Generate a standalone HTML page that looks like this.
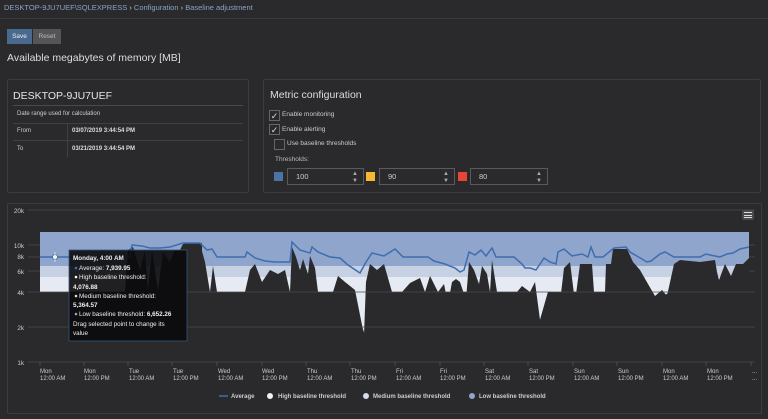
<!DOCTYPE html>
<html style="background:#2a2a2c"><head><meta charset="utf-8"><style>
*{margin:0;padding:0;box-sizing:border-box}
html,body{background:#2a2a2c}
body{width:768px;height:419px;font-family:"Liberation Sans",sans-serif;color:#ddd;position:relative;overflow:hidden}
.a{position:absolute;white-space:nowrap}
.panel{position:absolute;border:1px solid #3c3c3f;border-radius:2px}
.chk{position:absolute;width:11px;height:11px;border:1px solid #666;font-size:9px;line-height:10px;text-align:center;color:#ddd}
.inp{position:absolute;height:17px;border:1px solid #5a5a5d;font-size:7.5px;line-height:15px;padding-left:8px;color:#ccc}
.inp span{position:absolute;right:5px;font-size:6px;line-height:7px;top:2px;color:#aaa}
.sw{position:absolute;width:9px;height:9px}
</style></head><body>
<div class="a" style="left:0;top:0;width:768px;height:18px;background:#2a2a2c"></div>
<div class="a" style="left:4px;top:3px;font-size:7.5px;color:#8aa3c6">DESKTOP-9JU7UEF\SQLEXPRESS <span style="color:#ccc">›</span> Configuration <span style="color:#ccc">›</span> Baseline adjustment</div>
<div class="a" style="left:0;top:18px;width:768px;height:1px;background:#3a3a3c"></div>
<div class="a" style="left:7px;top:29px;width:25px;height:15px;background:#49698f;font-size:6.5px;line-height:15px;text-align:center;color:#eee">Save</div>
<div class="a" style="left:33px;top:29px;width:28px;height:15px;background:#555557;font-size:6.5px;line-height:15px;text-align:center;color:#bbb">Reset</div>
<div class="a" style="left:7px;top:52px;font-size:10.5px;color:#ddd">Available megabytes of memory [MB]</div>

<div class="panel" style="left:7px;top:79px;width:242px;height:114px"></div>
<div class="a" style="left:13px;top:90px;font-size:10.5px;color:#e6e6e6">DESKTOP-9JU7UEF</div>
<div class="a" style="left:13px;top:105px;width:230px;height:1px;background:#4a4a4d"></div>
<div class="a" style="left:17px;top:111px;font-size:6px;color:#ccc">Date range used for calculation</div>
<div class="a" style="left:13px;top:123px;width:230px;height:1px;background:#404043"></div>
<div class="a" style="left:17px;top:128px;font-size:6px;color:#ccc">From</div>
<div class="a" style="left:72px;top:128px;font-size:6px;font-weight:bold;color:#ddd">03/07/2019 3:44:54 PM</div>
<div class="a" style="left:13px;top:140px;width:230px;height:1px;background:#404043"></div>
<div class="a" style="left:17px;top:146px;font-size:6px;color:#ccc">To</div>
<div class="a" style="left:72px;top:146px;font-size:6px;font-weight:bold;color:#ddd">03/21/2019 3:44:54 PM</div>
<div class="a" style="left:67px;top:123px;width:1px;height:34px;background:#404043"></div>

<div class="panel" style="left:263px;top:79px;width:498px;height:114px"></div>
<div class="a" style="left:270px;top:89px;font-size:10.5px;color:#ddd">Metric configuration</div>
<div class="chk" style="left:269px;top:110px">✓</div><div class="a" style="left:282px;top:111px;font-size:6.5px;color:#ccc">Enable monitoring</div>
<div class="chk" style="left:269px;top:124px">✓</div><div class="a" style="left:282px;top:126px;font-size:6.5px;color:#ccc">Enable alerting</div>
<div class="chk" style="left:274px;top:139px"></div><div class="a" style="left:287px;top:140px;font-size:6.5px;color:#ccc">Use baseline thresholds</div>
<div class="a" style="left:275px;top:156px;font-size:6.5px;color:#bbb">Thresholds:</div>
<div class="sw" style="left:274px;top:172px;background:#4a74a6"></div>
<div class="inp" style="left:287px;top:168px;width:77px">100<span>▲<br>▼</span></div>
<div class="sw" style="left:366px;top:172px;background:#f5b833"></div>
<div class="inp" style="left:379px;top:168px;width:76px">90<span>▲<br>▼</span></div>
<div class="sw" style="left:458px;top:172px;background:#e84634"></div>
<div class="inp" style="left:470px;top:168px;width:78px">80<span>▲<br>▼</span></div>

<div class="panel" style="left:7px;top:203px;width:755px;height:211px"></div>
<div class="a" style="left:742px;top:210px;width:12px;height:10px;background:#4a4a4d;border-radius:2px"><div style="margin:2px 2px;height:6px;border-top:1px solid #ddd;border-bottom:1px solid #ddd;position:relative"><div style="position:absolute;top:2px;left:0;right:0;height:1px;background:#ddd"></div></div></div>
<svg class="a" style="left:0;top:0" width="768" height="419">
<g font-size="6.3" fill="#ccc" font-family="Liberation Sans" text-anchor="end">
<text x="24" y="213">20k</text><text x="24" y="248">10k</text><text x="24" y="259">8k</text><text x="24" y="274">6k</text><text x="24" y="295">4k</text><text x="24" y="330">2k</text><text x="24" y="365">1k</text></g>
<rect x="40" y="232" width="709" height="34" fill="#8fa5cb"/>
<rect x="40" y="266" width="709" height="11" fill="#c6d1e4"/>
<rect x="40" y="277" width="709" height="15" fill="#e6eaf3"/>
<polygon fill="#e6eaf3" points="350,292 366,338 372,292 530,292 540,320 548,292 640,292 660,298 670,292"/>
<polygon fill="#2a2a2c" points="40,292 125,292 128,250 133,247 140,270 145,250 148,290 152,250 158,290 163,252 170,262 175,250 180,250 183,244 200,244 205,262 210,292 213,266 217,292 245,292 250,270 255,264 262,282 270,270 278,274 285,270 290,292 292,247 296,257 300,270 303,259 308,274 310,256 315,268 318,292 333,292 338,276 345,282 355,290 364,335 366,282 370,264 377,270 384,264 392,292 402,292 410,283 420,278 425,292 430,276 438,292 444,284 448,304 452,282 456,279 460,282 466,300 469,262 474,270 479,284 482,266 487,274 490,292 492,260 497,292 517,292 522,286 530,292 535,282 540,320 548,292 555,292 560,302 564,268 570,262 575,302 580,264 592,264 594,292 605,292 606,264 611,264 613,249 627,249 633,262 640,270 648,284 655,296 662,290 667,296 674,264 680,260 700,262 715,260 717,272 719,280 725,264 731,276 736,264 743,264 749,258 749,362 40,362"/>
<rect x="184" y="243" width="18" height="12" fill="#2a2a2c"/>
<g stroke="#4a4a4e" stroke-width="0.8"><line x1="28" y1="210" x2="755" y2="210"/><line x1="28" y1="245" x2="40" y2="245"/><line x1="749" y1="245" x2="755" y2="245"/><line x1="28" y1="257" x2="40" y2="257"/><line x1="749" y1="257" x2="755" y2="257"/><line x1="28" y1="271" x2="40" y2="271"/><line x1="749" y1="271" x2="755" y2="271"/><line x1="28" y1="292" x2="755" y2="292"/><line x1="28" y1="327" x2="755" y2="327"/><line x1="28" y1="362" x2="755" y2="362"/></g>
<polyline fill="none" stroke="#3f6db0" stroke-width="1.5" points="40,257 130,257 132,245 142,246 150,248 160,248 170,247 183,243 200,243 207,250 212,249 217,257 245,257 247,252 255,258 265,261 275,262 290,262 292,242 300,250 310,253 312,247 318,252 330,257 340,258 348,265 360,273 366,262 372,253 384,256 395,249 403,257 428,257 434,261 445,264 455,268 460,272 464,270 469,252 475,255 481,250 486,256 492,248 496,257 514,257 522,264 525,268 530,268 536,270 544,258 550,262 556,264 558,252 564,249 572,256 582,254 588,257 591,247 595,257 603,257 614,248 626,247 630,252 647,262 651,261 660,254 665,252 674,257 700,257 706,254 710,255 720,257 727,254 733,253 740,249 749,247"/>
<circle cx="55" cy="257" r="2.5" fill="#fff" stroke="#4a6d9a"/><line x1="55" y1="252" x2="55" y2="262" stroke="#ddd"/>
<g stroke="#555" stroke-width="0.8"><line x1="40" y1="362" x2="40" y2="366"/><line x1="84" y1="362" x2="84" y2="366"/><line x1="128" y1="362" x2="128" y2="366"/><line x1="172" y1="362" x2="172" y2="366"/><line x1="217" y1="362" x2="217" y2="366"/><line x1="262" y1="362" x2="262" y2="366"/><line x1="306" y1="362" x2="306" y2="366"/><line x1="350" y1="362" x2="350" y2="366"/><line x1="395" y1="362" x2="395" y2="366"/><line x1="440" y1="362" x2="440" y2="366"/><line x1="484" y1="362" x2="484" y2="366"/><line x1="528" y1="362" x2="528" y2="366"/><line x1="573" y1="362" x2="573" y2="366"/><line x1="617" y1="362" x2="617" y2="366"/><line x1="662" y1="362" x2="662" y2="366"/><line x1="706" y1="362" x2="706" y2="366"/><line x1="751" y1="362" x2="751" y2="366"/></g>
<g font-size="6" fill="#ccc" font-family="Liberation Sans">
<text x="40" y="373">Mon</text><text x="40" y="380">12:00 AM</text>
<text x="84" y="373">Mon</text><text x="84" y="380">12:00 PM</text>
<text x="129" y="373">Tue</text><text x="129" y="380">12:00 AM</text>
<text x="173" y="373">Tue</text><text x="173" y="380">12:00 PM</text>
<text x="218" y="373">Wed</text><text x="218" y="380">12:00 AM</text>
<text x="262" y="373">Wed</text><text x="262" y="380">12:00 PM</text>
<text x="307" y="373">Thu</text><text x="307" y="380">12:00 AM</text>
<text x="351" y="373">Thu</text><text x="351" y="380">12:00 PM</text>
<text x="396" y="373">Fri</text><text x="396" y="380">12:00 AM</text>
<text x="440" y="373">Fri</text><text x="440" y="380">12:00 PM</text>
<text x="485" y="373">Sat</text><text x="485" y="380">12:00 AM</text>
<text x="529" y="373">Sat</text><text x="529" y="380">12:00 PM</text>
<text x="574" y="373">Sun</text><text x="574" y="380">12:00 AM</text>
<text x="618" y="373">Sun</text><text x="618" y="380">12:00 PM</text>
<text x="663" y="373">Mon</text><text x="663" y="380">12:00 AM</text>
<text x="707" y="373">Mon</text><text x="707" y="380">12:00 PM</text>
<text x="752" y="373">...</text><text x="752" y="380">...</text></g>
<g font-size="6" fill="#ccc" font-weight="bold" font-family="Liberation Sans">
<line x1="219" y1="396" x2="228" y2="396" stroke="#3f6db0" stroke-width="1.5"/><text x="231" y="398">Average</text>
<circle cx="270" cy="396" r="3" fill="#f2f2f2"/><text x="278" y="398">High baseline threshold</text>
<circle cx="366" cy="396" r="3" fill="#d5dcea"/><text x="373" y="398">Medium baseline threshold</text>
<circle cx="472" cy="396" r="3" fill="#8fa5cb"/><text x="479" y="398">Low baseline threshold</text></g>
<rect x="69" y="250" width="118" height="91" fill="rgba(10,10,12,0.9)" stroke="#36557f" stroke-width="0.8"/>
<g font-size="6.3" fill="#eee" font-family="Liberation Sans">
<text x="73" y="260" font-weight="bold">Monday, 4:00 AM</text>
<circle cx="76" cy="268" r="1.3" fill="#3f6db0"/><text x="79" y="270">Average: <tspan font-weight="bold">7,939.95</tspan></text>
<circle cx="76" cy="277" r="1.3" fill="#fff"/><text x="79" y="279">High baseline threshold:</text>
<text x="73" y="289" font-weight="bold">4,076.88</text>
<circle cx="76" cy="296" r="1.3" fill="#ddd"/><text x="79" y="298">Medium baseline threshold:</text>
<text x="73" y="307" font-weight="bold">5,364.57</text>
<circle cx="76" cy="314" r="1.3" fill="#8fa5cb"/><text x="79" y="316">Low baseline threshold: <tspan font-weight="bold">6,652.26</tspan></text>
<text x="73" y="326">Drag selected point to change its</text>
<text x="73" y="335">value</text></g>
</svg>
</body></html>
